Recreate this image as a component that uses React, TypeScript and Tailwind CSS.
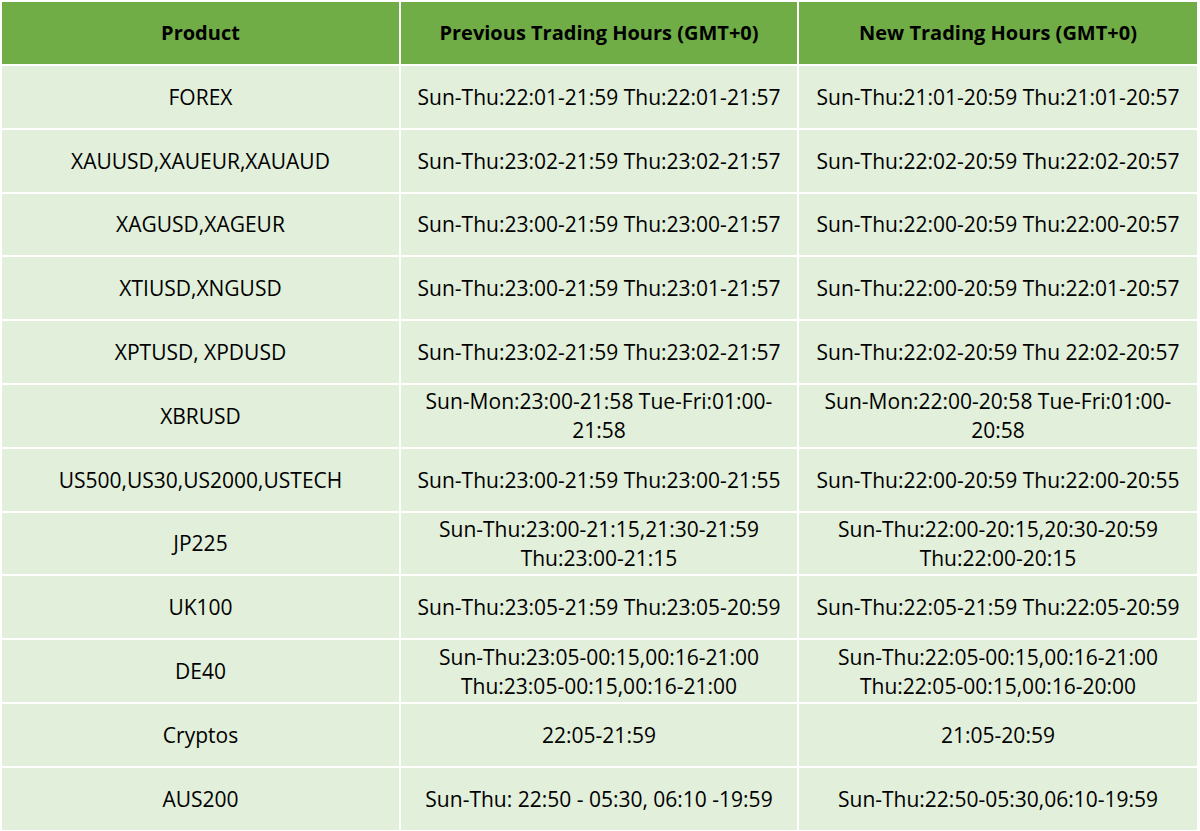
import React from "react";

type Row = {
  product: string;
  prev: string[];
  next: string[];
};

const rows: Row[] = [
  { product: "FOREX", prev: ["Sun-Thu:22:01-21:59 Thu:22:01-21:57"], next: ["Sun-Thu:21:01-20:59 Thu:21:01-20:57"] },
  { product: "XAUUSD,XAUEUR,XAUAUD", prev: ["Sun-Thu:23:02-21:59 Thu:23:02-21:57"], next: ["Sun-Thu:22:02-20:59 Thu:22:02-20:57"] },
  { product: "XAGUSD,XAGEUR", prev: ["Sun-Thu:23:00-21:59 Thu:23:00-21:57"], next: ["Sun-Thu:22:00-20:59 Thu:22:00-20:57"] },
  { product: "XTIUSD,XNGUSD", prev: ["Sun-Thu:23:00-21:59 Thu:23:01-21:57"], next: ["Sun-Thu:22:00-20:59 Thu:22:01-20:57"] },
  { product: "XPTUSD, XPDUSD", prev: ["Sun-Thu:23:02-21:59 Thu:23:02-21:57"], next: ["Sun-Thu:22:02-20:59 Thu 22:02-20:57"] },
  { product: "XBRUSD", prev: ["Sun-Mon:23:00-21:58 Tue-Fri:01:00-", "21:58"], next: ["Sun-Mon:22:00-20:58 Tue-Fri:01:00-", "20:58"] },
  { product: "US500,US30,US2000,USTECH", prev: ["Sun-Thu:23:00-21:59 Thu:23:00-21:55"], next: ["Sun-Thu:22:00-20:59 Thu:22:00-20:55"] },
  { product: "JP225", prev: ["Sun-Thu:23:00-21:15,21:30-21:59", "Thu:23:00-21:15"], next: ["Sun-Thu:22:00-20:15,20:30-20:59", "Thu:22:00-20:15"] },
  { product: "UK100", prev: ["Sun-Thu:23:05-21:59 Thu:23:05-20:59"], next: ["Sun-Thu:22:05-21:59 Thu:22:05-20:59"] },
  { product: "DE40", prev: ["Sun-Thu:23:05-00:15,00:16-21:00", "Thu:23:05-00:15,00:16-21:00"], next: ["Sun-Thu:22:05-00:15,00:16-21:00", "Thu:22:05-00:15,00:16-20:00"] },
  { product: "Cryptos", prev: ["22:05-21:59"], next: ["21:05-20:59"] },
  { product: "AUS200", prev: ["Sun-Thu: 22:50 - 05:30, 06:10 -19:59"], next: ["Sun-Thu:22:50-05:30,06:10-19:59"] },
];

const Cell = ({ lines }: { lines: string[] }) => (
  <div className="flex h-[61.8px] flex-col items-center justify-center bg-[#e2efda] pt-px text-center text-[21px] leading-[29px] text-black">
    {lines.map((l, i) => (
      <span key={i} className="whitespace-nowrap">
        {l}
      </span>
    ))}
  </div>
);

const App = () => {
  return (
    <div
      className="h-[831px] w-[1200px] overflow-hidden bg-white p-[2px]"
      style={{ fontFamily: '"Open Sans", "Liberation Sans", sans-serif' }}
    >
      <div className="grid grid-cols-[397px_396px_398px] gap-[2px]">
        {["Product", "Previous Trading Hours (GMT+0)", "New Trading Hours (GMT+0)"].map((h) => (
          <div
            key={h}
            className="flex h-[62px] items-center justify-center bg-[#70ad47] text-[20px] font-bold text-black"
          >
            {h}
          </div>
        ))}
        {rows.map((r) => (
          <React.Fragment key={r.product}>
            <Cell lines={[r.product]} />
            <Cell lines={r.prev} />
            <Cell lines={r.next} />
          </React.Fragment>
        ))}
      </div>
    </div>
  );
};

export default App;
